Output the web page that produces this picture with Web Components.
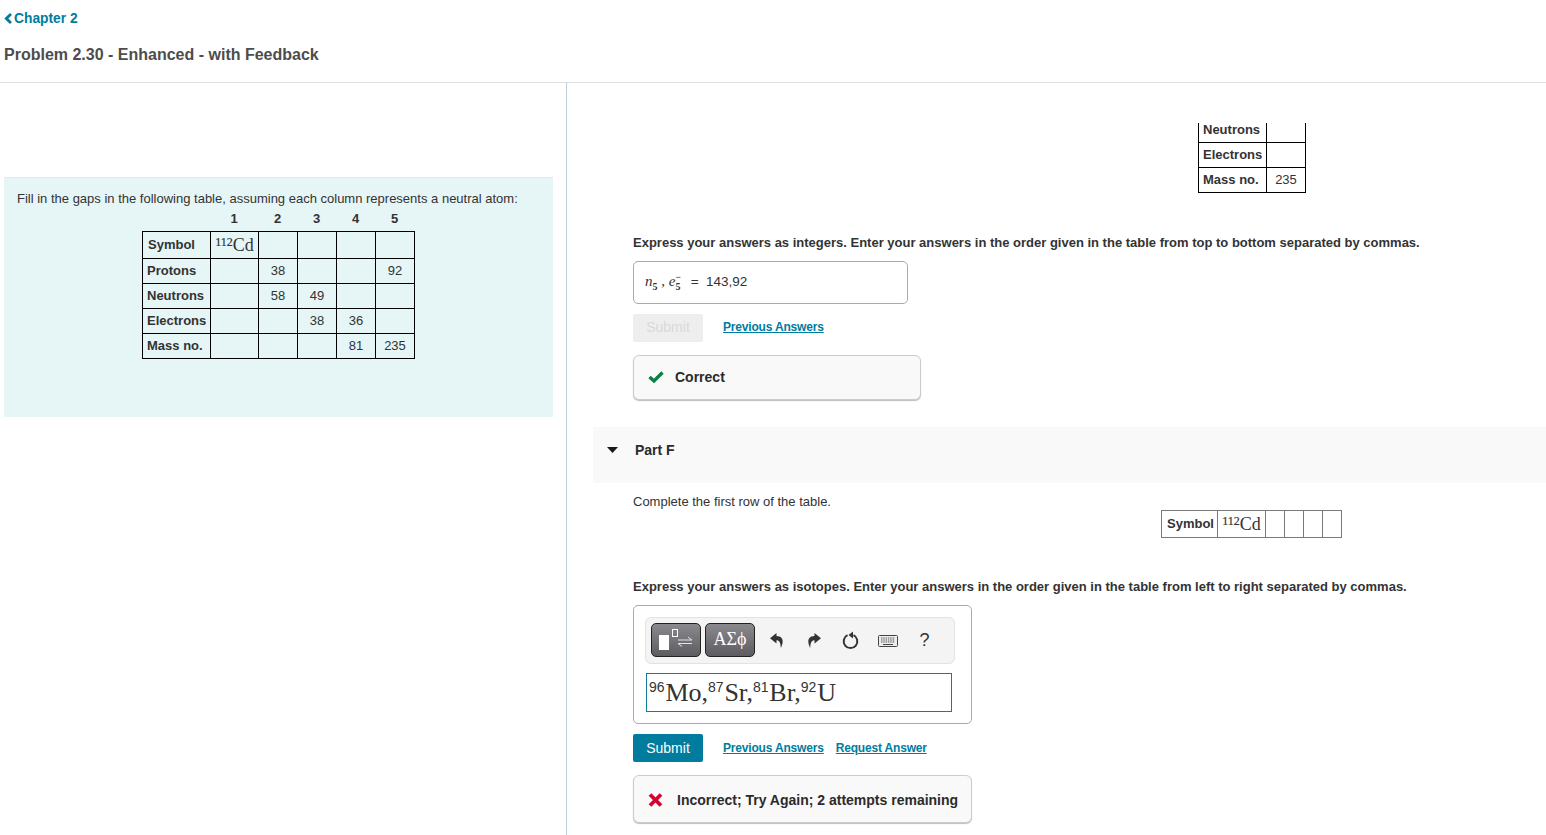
<!DOCTYPE html>
<html>
<head>
<meta charset="utf-8">
<title>Problem 2.30</title>
<style>
html, body { margin: 0; height: 835px; overflow: hidden; background: #fff; }
body { font-family: "Liberation Sans", Arial, sans-serif; font-size: 13px; color: #333; }
</style>
</head>
<body>
<problem-page></problem-page>
<script>
// element helper, every component is just a shadow root with its own style
function define(name, html, setup) {
  const template = document.createElement('template');
  template.innerHTML = html;
  customElements.define(name, class extends HTMLElement {
    constructor() {
      super();
      this.attachShadow({ mode: 'open' });
      this.shadowRoot.appendChild(template.content.cloneNode(true));
    }
    connectedCallback() {
      if (setup) setup(this);
    }
  });
}

define('chapter-header', `
<style>
:host { display: block; height: 82px; border-bottom: 1px solid #dfdfdf; box-sizing: content-box; padding-left: 4px; }
a { display: flex; align-items: center; height: 15px; padding-top: 11px; gap: 1px; color: #007c9e; font-weight: bold; font-size: 13.8px; text-decoration: none; }
svg { width: 9px; height: 11px; }
h1 { margin: 19px 0 0; font-size: 16px; line-height: 20px; font-weight: bold; color: #4d4d4d; }
</style>
<a href="#"><svg viewBox="0 0 9 11"><path d="M7 1 2.300 5.500 7 10" fill="none" stroke="#007c9e" stroke-width="2.800"/></svg>Chapter 2</a>
<h1>Problem 2.30 - Enhanced - with Feedback</h1>
`);

define('atom-symbol', `
<style>
:host { display: inline; font-family: "Liberation Serif", serif; font-size: 18px; line-height: 1; color: #333; white-space: nowrap; }
sup { font-size: 12px; line-height: 0; vertical-align: 5px; -webkit-text-stroke: .2px #333; }
</style>
<sup>112</sup>Cd
`);

// rows attribute: cells split by | and rows by ;  the first cell of a row is its label
define('atom-table', `
<style>
:host { display: block; font-size: 13px; color: #333; --line: #000; }
table { border-collapse: collapse; table-layout: fixed; }
td { border: 1px solid var(--line); padding: 0 0 1px; height: 23px; text-align: center; overflow: hidden; }
td.label { text-align: left; padding-left: 4px; font-weight: bold; white-space: nowrap; color: #333; }
tr.sym td { height: 25px; }
tr.sym td.label { padding-left: 5px; }
</style>
<table></table>
`, (el) => {
  const table = el.shadowRoot.querySelector('table');
  const widths = el.getAttribute('cols').split(',');
  const rows = el.getAttribute('rows').split(';');
  table.style.width = widths.reduce((a, b) => a + Number(b), 0) + 'px';
  const colgroup = document.createElement('colgroup');
  widths.forEach((w) => {
    const col = document.createElement('col');
    col.style.width = w + 'px';
    colgroup.appendChild(col);
  });
  table.appendChild(colgroup);
  rows.forEach((row) => {
    const tr = document.createElement('tr');
    row.split('|').forEach((text, i) => {
      const td = document.createElement('td');
      if (i === 0) td.className = 'label';
      if (text === 'CD') {
        td.appendChild(document.createElement('atom-symbol'));
      } else {
        td.textContent = text;
      }
      tr.appendChild(td);
    });
    if (row.includes('Symbol')) tr.className = 'sym';
    table.appendChild(tr);
  });
});

define('intro-panel', `
<style>
:host { display: block; margin: 94px 13px 0 4px; height: 239px; background: #e6f5f6; border-top: 1px solid #e3e9ea; font-size: 13px; color: #333; }
p { margin: 0; padding: 13px 0 0 13px; line-height: 15px; }
.nums { display: grid; grid-template-columns: 48px 39px 39px 39px 39px; margin: 5px 0 0 206px; height: 16px; line-height: 16px; font-weight: bold; text-align: center; }
atom-table { margin: 4px 0 0 138px; }
</style>
<p>Fill in the gaps in the following table, assuming each column represents a neutral atom:</p>
<div class="nums"><span>1</span><span>2</span><span>3</span><span>4</span><span>5</span></div>
<atom-table cols="68,48,39,39,39,39" rows="Symbol|CD||||;Protons||38|||92;Neutrons||58|49||;Electrons|||38|36|;Mass no.||||81|235"></atom-table>
`);

define('action-row', `
<style>
:host { display: flex; align-items: center; font-size: 12px; letter-spacing: -.18px; height: 28px; }
button { width: 70px; height: 28px; border: 0; border-radius: 2px; margin-right: 20px; padding: 0; font: 14px "Liberation Sans", Arial, sans-serif; letter-spacing: 0; background: #007c9e; color: #fff; }
:host([disabled]) button { background: #eeeeee; color: #d9d9d9; padding-bottom: 2px; }
::slotted(a) { color: #007c9e; font-weight: bold; margin-right: 12px; }
:host([disabled]) ::slotted(a) { margin-bottom: 2px; }
</style>
<button>Submit</button><slot></slot>
`);

define('feedback-box', `
<style>
:host { display: flex; align-items: center; box-sizing: border-box; border: 1px solid #cccccc; border-radius: 6px; background: #f9f9f9; box-shadow: 0 1px 1px #bdbdbd; padding-left: 14px; font-weight: bold; font-size: 14px; color: #2b2b2b; }
</style>
<slot name="icon"></slot><slot></slot>
`);

define('part-band', `
<style>
:host { display: flex; align-items: center; height: 56px; background: #f9f9f9; font-weight: bold; font-size: 14px; color: #2b2b2b; padding-bottom: 10px; box-sizing: border-box; padding-left: 14px; }
svg { width: 11px; height: 6px; margin-right: 17px; }
</style>
<svg viewBox="0 0 11 6"><path d="M0 0h11L5.500 6z" fill="#1a1a1a"/></svg><slot></slot>
`);

define('math-toolbar', `
<style>
:host { display: flex; align-items: center; box-sizing: border-box; width: 310px; height: 47px; border: 1px solid #e2e2e2; border-radius: 6px; background: #f4f4f4; padding-left: 5px; }
.btn { box-sizing: border-box; width: 50px; height: 34px; margin-bottom: 1px; border: 1px solid #222; border-radius: 5px; background: linear-gradient(#8a898d, #5d5c61); margin-right: 4px; display: flex; align-items: center; justify-content: center; color: #fff; font: 18px "Liberation Serif", serif; padding-bottom: 1px; }
svg { display: block; }
.tool { display: flex; justify-content: center; width: 37px; color: #333; font-size: 18px; }
.tools { display: flex; align-items: center; margin-left: -1px; }
</style>
<div class="btn"><svg width="44" height="26" viewBox="0 0 44 26">
  <rect x="5" y="8" width="10" height="15" fill="#fff"/>
  <rect x="18.500" y="2.500" width="5" height="7" fill="none" stroke="#fff"/>
  <path d="M24 13h14l-4-3M38 16.500H24l4 3" fill="none" stroke="#e4e4e4" stroke-width="1"/>
</svg></div>
<div class="btn">ΑΣϕ</div>
<div class="tools">
  <div class="tool"><svg width="14" height="15" viewBox="0 0 14 15"><path d="M6.500 0 0 5.200l6.500 5.300V7.300c2.700 0 4.100 2.100 4.300 7.700 2.700-5 3.500-11.600-4.300-11.900z" fill="#333"/></svg></div>
  <div class="tool"><svg width="14" height="15" viewBox="0 0 14 15"><path d="M7.500 0 14 5.200l-6.500 5.300V7.300c-2.700 0-4.100 2.100-4.300 7.700-2.700-5-3.500-11.600 4.300-11.900z" fill="#333"/></svg></div>
  <div class="tool"><svg width="17" height="19" viewBox="0 0 17 19"><path d="M5.500 4.200a6.800 6.800 0 1 0 6 0" fill="none" stroke="#333" stroke-width="2"/><path d="M11 .5v7l-4.500-3.500z" fill="#333"/></svg></div>
  <div class="tool"><svg width="20" height="12" viewBox="0 0 20 12"><rect x=".5" y=".5" width="19" height="11" rx="1" fill="#eee" stroke="#444"/><path d="M3 3h14M3 5h14M3 7h14" stroke="#555" stroke-dasharray="1.500 .8"/><path d="M5 9.500h10" stroke="#444"/></svg></div>
  <div class="tool">?</div>
</div>
`);

define('answer-input', `
<style>
:host { display: flex; align-items: center; box-sizing: border-box; width: 306px; height: 39px; border: 1px solid #117c9c; padding: 0 0 0 2px; font: 26px "Liberation Serif", serif; color: #333; white-space: nowrap; margin-left: 1px; }
sup { font: 14px "Liberation Sans", Arial, sans-serif; line-height: 0; vertical-align: 9px; margin-right: .8px; }
</style>
<div><sup>96</sup>Mo,<sup>87</sup>Sr,<sup>81</sup>Br,<sup>92</sup>U</div>
`);

define('right-pane', `
<style>
:host { display: block; flex: 1; min-width: 0; font-size: 13px; color: #333; }
.clip { display: flex; align-items: flex-end; height: 70px; overflow: hidden; margin: 40px 0 0 631px; }
.body { margin-left: 66px; }
.strong { margin: 0; font-weight: bold; font-size: 13px; line-height: 16px; color: #333; }
.answer { box-sizing: border-box; width: 275px; height: 43px; margin-top: 10px; border: 1px solid #aaa; border-radius: 5px; display: flex; align-items: center; padding: 0 0 3px 11px; font-size: 13.500px; }
.answer i { font: italic 15px "Liberation Serif", serif; margin-right: 10px; white-space: nowrap; }
.answer sub { font: bold 10px "Liberation Serif", serif; line-height: 0; }
.answer sup { font: 9px "Liberation Sans", Arial, sans-serif; line-height: 0; margin-left: -5px; }
a { color: #007c9e; }
.first { margin-top: 10px; }
.correct { width: 288px; height: 45px; margin-top: 13px; padding-bottom: 2px; }
.correct svg { margin-right: 11px; }
part-band { margin: 27px 0 0 26px; }
.plain { margin: 11px 0 0; line-height: 15px; }
.row-one { margin: 1px 0 0 528px; --line: #7a7a7a; }
.isotopes { margin-top: 41px; }
.work { box-sizing: border-box; width: 339px; height: 119px; margin-top: 10px; border: 1px solid #aaa; border-radius: 5px; padding: 11px 0 0 11px; }
answer-input { margin-top: 9px; }
.second { margin-top: 10px; }
.wrong { width: 339px; height: 48px; margin-top: 13px; padding-top: 2px; }
.wrong svg { margin-right: 13px; }
</style>
<div class="clip"><atom-table cols="68,39" rows="Neutrons|;Electrons|;Mass no.|235"></atom-table></div>
<div class="body">
  <p class="strong" style="margin-top:42px">Express your answers as integers. Enter your answers in the order given in the table from top to bottom separated by commas.</p>
  <div class="answer"><i>n<sub>5</sub> , e<sub>5</sub><sup>−</sup></i>=&nbsp; 143,92</div>
  <action-row class="first" disabled><a href="#">Previous Answers</a></action-row>
  <feedback-box class="correct"><svg slot="icon" width="16" height="14" viewBox="0 0 16 14"><path d="M1.500 7 6 11 14.500 2.500" fill="none" stroke="#0a8043" stroke-width="3.400"/></svg>Correct</feedback-box>
</div>
<part-band>Part F</part-band>
<div class="body">
  <p class="plain">Complete the first row of the table.</p>
  <atom-table class="row-one" cols="56,48,19,19,19,19" rows="Symbol|CD||||"></atom-table>
  <p class="strong isotopes">Express your answers as isotopes. Enter your answers in the order given in the table from left to right separated by commas.</p>
  <div class="work">
    <math-toolbar></math-toolbar>
    <answer-input></answer-input>
  </div>
  <action-row class="second"><a href="#">Previous Answers</a><a href="#">Request Answer</a></action-row>
  <feedback-box class="wrong"><svg slot="icon" width="16" height="14" viewBox="0 0 16 14"><path d="M2 1.500 13 12.500M13 1.500 2 12.500" fill="none" stroke="#d9002c" stroke-width="3.800"/></svg>Incorrect; Try Again; 2 attempts remaining</feedback-box>
</div>
`);

define('problem-page', `
<style>
:host { display: block; }
.panes { display: flex; height: 752px; overflow: hidden; }
.left { width: 566px; flex: none; border-right: 1px solid #b9d0dc; }
</style>
<chapter-header></chapter-header>
<div class="panes">
  <div class="left"><intro-panel></intro-panel></div>
  <right-pane></right-pane>
</div>
`);
</script>
</body>
</html>
